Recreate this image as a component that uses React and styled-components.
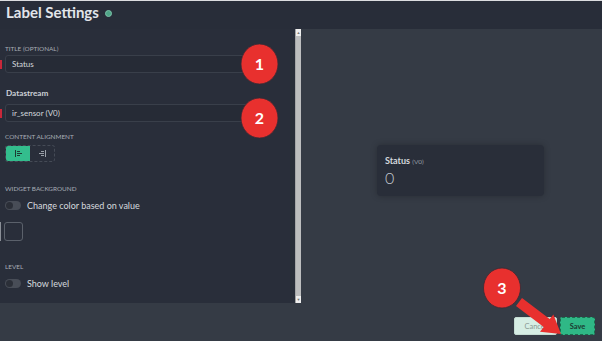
import React from 'react'
import styled, { createGlobalStyle } from 'styled-components'

const Global = createGlobalStyle`
  html, body { margin: 0; padding: 0; background: #353b45; }
  * { box-sizing: border-box; }
`

const Page = styled.div`
  position: relative;
  width: 602px;
  height: 341px;
  display: flex;
  flex-direction: column;
  background: #353b45;
  border-top: 1px solid #dcdde0;
  font-family: Lato, "Open Sans", sans-serif;
  overflow: hidden;
`

const Header = styled.div`
  height: 28px;
  flex-shrink: 0;
  display: flex;
  align-items: flex-start;
  gap: 6px;
  padding: 1px 0 0 6px;
  background: #282d39;
`

const Title = styled.h1`
  margin: 0;
  font-size: 15px;
  line-height: 20px;
  font-weight: 700;
  color: #e2e5ea;
`

const Dot = styled.span`
  width: 7px;
  height: 7px;
  margin-top: 8px;
  border-radius: 50%;
  background: #4fa487;
  border: 1px solid #7cc3aa;
`

const Body = styled.div`
  height: 274px;
  flex-shrink: 0;
  display: flex;
`

const Sidebar = styled.div`
  width: 295px;
  display: flex;
  flex-direction: column;
  background: #292e3a;
`

const SmallLabel = styled.div`
  margin: ${p => p.$mt}px 0 0 5px;
  font-size: 6.4px;
  line-height: 8px;
  color: #a7adb5;
  text-transform: uppercase;
`

const SectionLabel = styled.div`
  margin: ${p => p.$mt}px 0 0 6px;
  font-size: 8.2px;
  line-height: 12px;
  font-weight: 700;
  color: #cdd1d7;
`

const FieldRow = styled.div`
  margin-top: ${p => p.$mt}px;
  display: flex;
  align-items: center;
  gap: 3px;
`

const Marker = styled.span`
  width: ${p => p.$w}px;
  height: ${p => p.$h}px;
  background: ${p => p.$color};
`

const Input = styled.div`
  width: 245px;
  height: 18px;
  display: flex;
  align-items: center;
  padding-left: 6px;
  border: 1px solid #393f4a;
  border-radius: 3px;
  background: #262b36;
  font-size: 8px;
  color: #d4d8dd;
`

const AlignGroup = styled.div`
  margin: ${p => p.$mt}px 0 0 5px;
  width: 50px;
  height: 17px;
  display: flex;
  border: 1px dashed #454b56;
  border-radius: 3px;
  overflow: hidden;
`

const AlignButton = styled.div`
  flex: 1;
  display: flex;
  align-items: center;
  justify-content: center;
  background: ${p => (p.$active ? '#33bd8d' : 'transparent')};
  color: ${p => (p.$active ? '#1d3b33' : '#9aa0a8')};
`

const ToggleRow = styled.div`
  margin: ${p => p.$mt}px 0 0 5px;
  height: 10px;
  display: flex;
  align-items: center;
  gap: 6px;
  font-size: 9px;
  color: #d6dadf;
`

const Switch = styled.span`
  width: 16px;
  height: 9px;
  border-radius: 5px;
  background: #484d57;
  display: flex;
  align-items: center;
  padding-left: 1px;

  &::after {
    content: '';
    width: 7px;
    height: 7px;
    border-radius: 50%;
    background: #2b2f38;
  }
`

const ColorBox = styled.div`
  width: 19px;
  height: 19px;
  border: 1px solid #5b616b;
  border-radius: 3px;
`

const Scrollbar = styled.div`
  width: 6px;
  display: flex;
  flex-direction: column;
  justify-content: space-between;
  background: #bdbebf;
  border-left: 1px solid #a5a6a8;
`

const ScrollArrow = styled.span`
  height: 7px;
  background: #eeeeee;
  font-size: 4px;
  line-height: 7px;
  text-align: center;
  color: #777;
`

const Preview = styled.div`
  flex: 1;
  display: flex;
  align-items: center;
  justify-content: center;
  background: #353b45;
`

const Card = styled.div`
  width: 167px;
  height: 51px;
  margin: 9px 0 0 18px;
  padding: 10px 8px 0;
  border-radius: 4px;
  background: #292e39;
  box-shadow: 0 0 6px rgba(0, 0, 0, 0.25);
`

const CardTitle = styled.div`
  font-size: 9px;
  line-height: 11px;
  font-weight: 700;
  color: #d6d9de;

  small {
    font-size: 6.5px;
    font-weight: 400;
    color: #979da6;
  }
`

const CardValue = styled.div`
  margin-top: 1px;
  font-size: 16px;
  line-height: 20px;
  font-weight: 300;
  color: #c4c8cf;
`

const Footer = styled.div`
  flex: 1;
  display: flex;
  justify-content: flex-end;
  align-items: flex-end;
  gap: 3px;
  padding: 0 7px 6px 0;
`

const Button = styled.button`
  width: ${p => p.$w}px;
  height: 18px;
  padding: 0;
  border-radius: 2px;
  font-family: inherit;
  font-size: 7.5px;
  font-weight: ${p => (p.$primary ? 700 : 400)};
  background: ${p => (p.$primary ? '#2fb886' : '#d6ede4')};
  color: ${p => (p.$primary ? '#1c3a31' : '#8b9a95')};
  border: 1px ${p => (p.$primary ? 'dashed #1b6c4f' : 'solid #c5dcd3')};
`

const Annotations = styled.svg`
  position: absolute;
  inset: 0;
  pointer-events: none;
`

function Badge({ cx, cy, n }) {
  return (
    <g>
      <ellipse cx={cx} cy={cy} rx="18.5" ry="20" fill="#e8302e" stroke="#3a2a33" strokeWidth="0.8" />
      <text x={cx} y={cy + 6} textAnchor="middle" fontFamily="Lato, sans-serif" fontWeight="700" fontSize="16" fill="#fff">
        {n}
      </text>
    </g>
  )
}

function AlignLeftIcon() {
  return (
    <svg width="7" height="7" viewBox="0 0 7 7">
      <rect x="0" y="0" width="1" height="7" fill="currentColor" />
      <rect x="2" y="1" width="3" height="1" fill="currentColor" />
      <rect x="2" y="3" width="5" height="1" fill="currentColor" />
      <rect x="2" y="5" width="3" height="1" fill="currentColor" />
    </svg>
  )
}

function AlignRightIcon() {
  return (
    <svg width="7" height="7" viewBox="0 0 7 7">
      <rect x="6" y="0" width="1" height="7" fill="currentColor" />
      <rect x="2" y="1" width="3" height="1" fill="currentColor" />
      <rect x="0" y="3" width="5" height="1" fill="currentColor" />
      <rect x="2" y="5" width="3" height="1" fill="currentColor" />
    </svg>
  )
}

export default function App() {
  return (
    <Page>
      <Global />
      <Header>
        <Title>Label Settings</Title>
        <Dot />
      </Header>
      <Body>
        <Sidebar>
          <SmallLabel $mt={15.5}>Title (optional)</SmallLabel>
          <FieldRow $mt={2.5}>
            <Marker $w={2} $h={9} $color="#c9283a" />
            <Input>Status</Input>
          </FieldRow>
          <SectionLabel $mt={14}>Datastream</SectionLabel>
          <FieldRow $mt={5}>
            <Marker $w={2} $h={9} $color="#c9283a" />
            <Input>ir_sensor (V0)</Input>
          </FieldRow>
          <SmallLabel $mt={11}>Content alignment</SmallLabel>
          <AlignGroup $mt={4}>
            <AlignButton $active><AlignLeftIcon /></AlignButton>
            <AlignButton><AlignRightIcon /></AlignButton>
          </AlignGroup>
          <SmallLabel $mt={23}>Widget background</SmallLabel>
          <ToggleRow $mt={7}>
            <Switch />
            Change color based on value
          </ToggleRow>
          <FieldRow $mt={12}>
            <Marker $w={1} $h={19} $color="#8a8f97" />
            <ColorBox />
          </FieldRow>
          <SmallLabel $mt={22}>Level</SmallLabel>
          <ToggleRow $mt={7}>
            <Switch />
            Show level
          </ToggleRow>
        </Sidebar>
        <Scrollbar>
          <ScrollArrow>▲</ScrollArrow>
          <ScrollArrow>▼</ScrollArrow>
        </Scrollbar>
        <Preview>
          <Card>
            <CardTitle>Status <small>(V0)</small></CardTitle>
            <CardValue>0</CardValue>
          </Card>
        </Preview>
      </Body>
      <Footer>
        <Button $w={43}>Cancel</Button>
        <Button $w={35} $primary>Save</Button>
      </Footer>
      <Annotations width="602" height="341" viewBox="0 0 602 341">
        <Badge cx={259.5} cy={63} n="1" />
        <Badge cx={259.5} cy={117} n="2" />
        <polygon
          points="516,305 543.7,326.1 540,330.8 561,333 553.4,313.4 549.7,318.1 522,297"
          fill="#e8302e"
        />
        <Badge cx={502} cy={287} n="3" />
      </Annotations>
    </Page>
  )
}
